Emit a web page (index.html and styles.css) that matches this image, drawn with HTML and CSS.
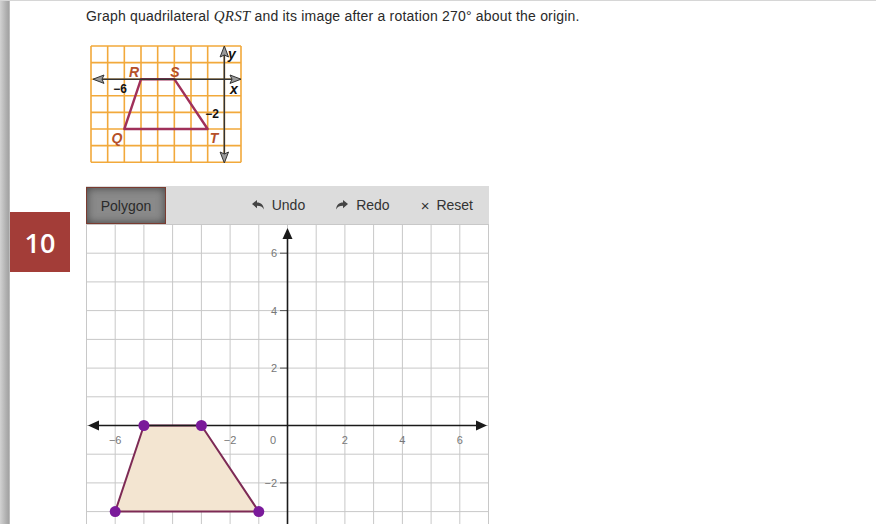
FILE: index.html
```html
<!DOCTYPE html>
<html lang="en">
<head>
    <meta charset="UTF-8">
    <meta name="viewport" content="width=device-width, initial-scale=1.0">
    <title>Rotation - Question 10</title>
    <link rel="stylesheet" href="styles.css">
</head>
<body>
<div class="page">
    <div class="rail"></div>

    <div class="gutter">
        <div class="qnum">10</div>
    </div>

    <div class="content">
        <p class="prompt">Graph quadrilateral <span class="math">QRST</span> and its image after a rotation 270° about the origin.</p>

        <!-- original figure -->
        <svg class="figure" width="152" height="119" viewBox="0 0 152 119">
            <rect x="1" y="1" width="150" height="116.2" fill="#fff"/>
            <path class="fig-grid" d="M1 1V117.2 M17.67 1V117.2 M34.33 1V117.2 M51 1V117.2 M67.67 1V117.2 M84.33 1V117.2 M101 1V117.2 M117.67 1V117.2 M134.33 1V117.2 M151 1V117.2
                M1 1H151 M1 17.6H151 M1 34.2H151 M1 50.8H151 M1 67.4H151 M1 84H151 M1 100.6H151 M1 117.2H151"/>
            <polygon class="fig-shape" points="34.33,84 51,34.2 84.33,34.2 117.67,84"/>
            <path class="fig-axis" d="M10 34.2H144 M134.33 8V111"/>
            <polygon class="fig-arrow" points="3,34.2 14,30 12,34.2 14,38.4"/>
            <polygon class="fig-arrow" points="151,34.2 140,30 142,34.2 140,38.4"/>
            <polygon class="fig-arrow" points="134.33,1 130.1,12 134.33,10 138.5,12"/>
            <polygon class="fig-arrow" points="134.33,118 130.1,107 134.33,109 138.5,107"/>
            <text class="fig-pt" x="44" y="32">R</text>
            <text class="fig-pt" x="85" y="32">S</text>
            <text class="fig-pt" x="27" y="98">Q</text>
            <text class="fig-pt" x="124" y="98">T</text>
            <text class="fig-var" x="142" y="14">y</text>
            <text class="fig-var" x="144" y="49">x</text>
            <text class="fig-num" x="30" y="48">−6</text>
            <text class="fig-num" x="122" y="73">−2</text>
        </svg>

        <div class="graph-tool">
            <div class="toolbar">
                <button class="tool-mode">Polygon</button>
                <div class="actions">
                    <span class="action">
                        <svg width="12" height="10" viewBox="0 0 12 10"><path d="M0 4L5 0V2.5C9 2.5 11.5 5 12 9.5C10.5 6.8 8.5 5.8 5 5.8V8.2Z"/></svg>
                        Undo
                    </span>
                    <span class="action">
                        <svg width="12" height="10" viewBox="0 0 12 10"><path d="M12 4L7 0V2.5C3 2.5 0.5 5 0 9.5C1.5 6.8 3.5 5.8 7 5.8V8.2Z"/></svg>
                        Redo
                    </span>
                    <span class="action"><span class="times">×</span> Reset</span>
                </div>
            </div>

            <svg class="plane" width="403" height="403" viewBox="0 0 403 403">
                <path class="grid" d="M0.5 0V403 M29.2 0V403 M57.9 0V403 M86.6 0V403 M115.4 0V403 M144.1 0V403 M172.8 0V403 M201.5 0V403 M230.2 0V403 M258.9 0V403 M287.6 0V403 M316.4 0V403 M345.1 0V403 M373.8 0V403 M402.5 0V403
                    M0 0.5H403 M0 29.2H403 M0 57.9H403 M0 86.6H403 M0 115.4H403 M0 144.1H403 M0 172.8H403 M0 201.5H403 M0 230.2H403 M0 258.9H403 M0 287.6H403 M0 316.4H403 M0 345.1H403 M0 373.8H403 M0 402.5H403"/>

                <text class="tick-label" x="29.2" y="220">−6</text>
                <text class="tick-label" x="86.6" y="220">−4</text>
                <text class="tick-label" x="144.1" y="220">−2</text>
                <text class="tick-label" x="187" y="220">0</text>
                <text class="tick-label" x="258.9" y="220">2</text>
                <text class="tick-label" x="316.4" y="220">4</text>
                <text class="tick-label" x="373.8" y="220">6</text>
                <text class="tick-label end" x="191" y="33">6</text>
                <text class="tick-label end" x="191" y="90.5">4</text>
                <text class="tick-label end" x="191" y="148">2</text>
                <text class="tick-label end" x="191" y="262.8">−2</text>
                <path class="ticks" d="M194 29.2H201.5 M194 86.6H201.5 M194 144.1H201.5 M194 258.9H201.5"/>

                <polygon class="shape" points="57.9,201.5 115.4,201.5 172.8,287.6 29.2,287.6"/>

                <path class="axis" d="M12 201.5H390 M201.5 14V403"/>
                <polygon class="arrow" points="2,201.5 13,196.5 13,206.5"/>
                <polygon class="arrow" points="401,201.5 390,196.5 390,206.5"/>
                <polygon class="arrow" points="201.5,4 196.5,15 206.5,15"/>

                <circle class="vertex" cx="57.9" cy="201.5" r="5.5"/>
                <circle class="vertex" cx="115.4" cy="201.5" r="5.5"/>
                <circle class="vertex" cx="172.8" cy="287.6" r="5.5"/>
                <circle class="vertex" cx="29.2" cy="287.6" r="5.5"/>
            </svg>
        </div>
    </div>
</div>
</body>
</html>
```

FILE: styles.css
```css
body { margin: 0; font-family: "Liberation Sans", Arial, sans-serif; color: #222; background: #fff; overflow: hidden; }
.page { display: flex; border-top: 1px solid #d6d6d6; min-height: 523px; }
.rail { width: 10px; flex: none; background: linear-gradient(to right, #d2d2d2, #b0b0b0 60%, #a4a4a4 85%, #c6c6c6); }
.gutter { width: 60px; flex: none; padding-top: 211px; }
.qnum { height: 60px; background: #a33d38; color: #fff; font-family: "Open Sans", sans-serif; font-weight: 600; font-size: 27px; display: flex; align-items: center; justify-content: center; }
.content { margin-left: 16px; width: 403px; }

.prompt { margin: 0; padding-top: 7px; font-size: 14px; letter-spacing: 0.2px; line-height: 16px; white-space: nowrap; color: #2a2a2a; }
.math { font-family: "Liberation Serif", serif; font-style: italic; font-size: 15px; }

.figure { display: block; margin: 21px 0 0 4px; }
.fig-grid { stroke: #f2a93b; stroke-width: 1.6; fill: none; }
.fig-shape { fill: none; stroke: #a0305a; stroke-width: 2.4; stroke-linejoin: round; }
.fig-axis { stroke: #333; stroke-width: 1.5; fill: none; }
.fig-arrow { fill: #9a9a9a; stroke: #333; stroke-width: 1; stroke-linejoin: round; }
.fig-pt { font: italic bold 14px "Liberation Sans", sans-serif; fill: #b5502a; text-anchor: middle; }
.fig-var { font: italic bold 14px "Liberation Sans", sans-serif; fill: #111; text-anchor: middle; }
.fig-num { font: bold 12px "Liberation Sans", sans-serif; fill: #111; text-anchor: middle; }

.graph-tool { margin-top: 22px; }
.toolbar { height: 38px; background: #dcdcdc; display: flex; align-items: center; justify-content: space-between; }
.tool-mode { width: 80px; height: 37px; margin-top: 1px; border: 1px solid #7a3b30; background: #8a8a8a; box-shadow: inset 0 0 8px #444; font: 14px "Liberation Sans", sans-serif; color: #2a2a2a; padding: 0; }
.actions { display: flex; gap: 31px; padding-right: 16px; font-size: 14px; color: #333; }
.action { display: flex; align-items: center; gap: 8px; }
.action svg { fill: #444; }
.times { font-size: 15px; margin-right: -1px; }

.plane { display: block; }
.grid { stroke: #c8c8c8; stroke-width: 1; fill: none; }
.axis { stroke: #1a1a1a; stroke-width: 1.6; fill: none; }
.arrow { fill: #1a1a1a; }
.ticks { stroke: #555; stroke-width: 1; }
.tick-label { font: 11px "Liberation Sans", sans-serif; fill: #777; text-anchor: middle; }
.tick-label.end { text-anchor: end; }
.shape { fill: #f3e5d1; stroke: #7d2a55; stroke-width: 2; stroke-linejoin: round; }
.vertex { fill: #7a1a9a; }
```
